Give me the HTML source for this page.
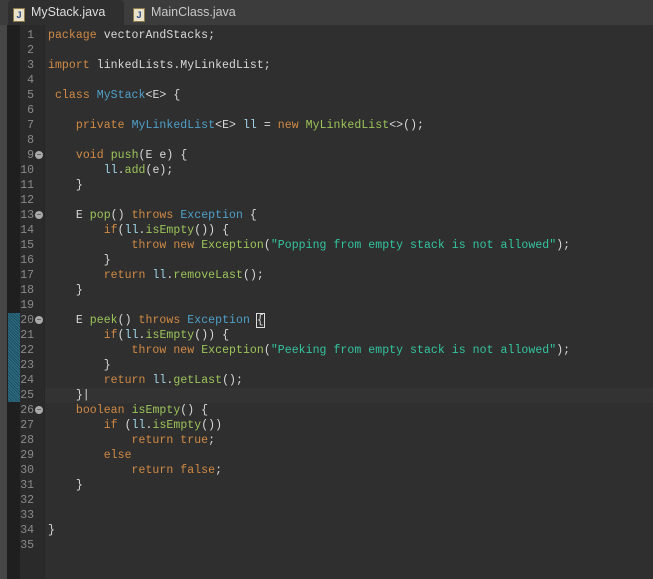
<!DOCTYPE html>
<html><head><meta charset="utf-8"><style>
html,body{margin:0;padding:0;width:653px;height:579px;overflow:hidden;background:#2f2f2f;font-family:"Liberation Sans",sans-serif}
#tabs{position:absolute;left:0;top:0;width:653px;height:25px;background:#3c3c3c}
.tab{position:absolute;top:0;height:25px;font-size:12.5px;line-height:24px;color:#ddd}
#t1{left:8px;width:116px;background:#2f2f2f;border-radius:4px 4px 0 0}
#t2{left:128px;color:#c8c8c8}
.ic{display:inline-block;width:10px;height:12px;background:#e9e2c8;border:1px solid #8a7a4a;vertical-align:-2px;margin:0 6px 0 5px;font-size:9px;line-height:12px;text-align:center;color:#2b4a8a;font-weight:bold}
#strip{position:absolute;left:0;top:25px;width:7px;height:554px;background:#474747}
#dk{position:absolute;left:7px;top:25px;width:13px;height:554px;background:#1f1f1f}
#gut{position:absolute;left:20px;top:25px;width:24px;height:554px;background:#2a2a2a;border-right:1px solid #262626}
#hl{position:absolute;left:8px;top:313px;width:12px;height:89px;background:repeating-linear-gradient(45deg,#2d6f86 0 1px,#1f4d5e 1px 2px)}
#cur{position:absolute;left:45px;top:388px;width:608px;height:15px;background:#333}
pre{margin:0;position:absolute;top:28px;font-family:"Liberation Mono",monospace;font-size:11.5px;line-height:15px}
#nums{left:20px;width:14px;text-align:right;color:#8a8a8a}
#code{left:48px;color:#d9d9d9;letter-spacing:0.06px}
.k{color:#d08a45}.t{color:#4fa0c8}.m{color:#9cc45a}.s{color:#34c4a0}.f{color:#9fd2e6}
.fold{position:absolute;left:35px;width:8px;height:8px;border-radius:50%;background:#aaa;color:#333;font-size:8px;line-height:8px;text-align:center}
.box{outline:1px solid #ddd}
</style></head><body>
<div id="tabs"><div class="tab" id="t1"><span class="ic">J</span>MyStack.java <span style="margin-left:8px;font-weight:bold;color:#eee">✖</span></div><div class="tab" id="t2"><span class="ic">J</span>MainClass.java</div></div>
<div id="strip"></div><div id="dk"></div><div id="gut"></div><div id="hl"></div><div id="cur"></div>
<div class="fold" style="top:151px">−</div><div class="fold" style="top:211px">−</div><div class="fold" style="top:316px">−</div><div class="fold" style="top:406px">−</div>
<pre id="nums">1
2
3
4
5
6
7
8
9
10
11
12
13
14
15
16
17
18
19
20
21
22
23
24
25
26
27
28
29
30
31
32
33
34
35</pre>
<pre id="code"><span class="k">package</span> vectorAndStacks;

<span class="k">import</span> linkedLists.MyLinkedList;

 <span class="k">class</span> <span class="t">MyStack</span>&lt;E&gt; {

    <span class="k">private</span> <span class="t">MyLinkedList</span>&lt;E&gt; <span class="f">ll</span> = <span class="k">new</span> <span class="m">MyLinkedList</span>&lt;&gt;();

    <span class="k">void</span> <span class="m">push</span>(E e) {
        <span class="f">ll</span>.<span class="m">add</span>(e);
    }

    E <span class="m">pop</span>() <span class="k">throws</span> <span class="t">Exception</span> {
        <span class="k">if</span>(<span class="f">ll</span>.<span class="m">isEmpty</span>()) {
            <span class="k">throw</span> <span class="k">new</span> <span class="m">Exception</span>(<span class="s">"Popping from empty stack is not allowed"</span>);
        }
        <span class="k">return</span> <span class="f">ll</span>.<span class="m">removeLast</span>();
    }

    E <span class="m">peek</span>() <span class="k">throws</span> <span class="t">Exception</span> <span class="box">{</span>
        <span class="k">if</span>(<span class="f">ll</span>.<span class="m">isEmpty</span>()) {
            <span class="k">throw</span> <span class="k">new</span> <span class="m">Exception</span>(<span class="s">"Peeking from empty stack is not allowed"</span>);
        }
        <span class="k">return</span> <span class="f">ll</span>.<span class="m">getLast</span>();
    }|
    <span class="k">boolean</span> <span class="m">isEmpty</span>() {
        <span class="k">if</span> (<span class="f">ll</span>.<span class="m">isEmpty</span>())
            <span class="k">return</span> <span class="k">true</span>;
        <span class="k">else</span>
            <span class="k">return</span> <span class="k">false</span>;
    }


}
</pre>
</body></html>
